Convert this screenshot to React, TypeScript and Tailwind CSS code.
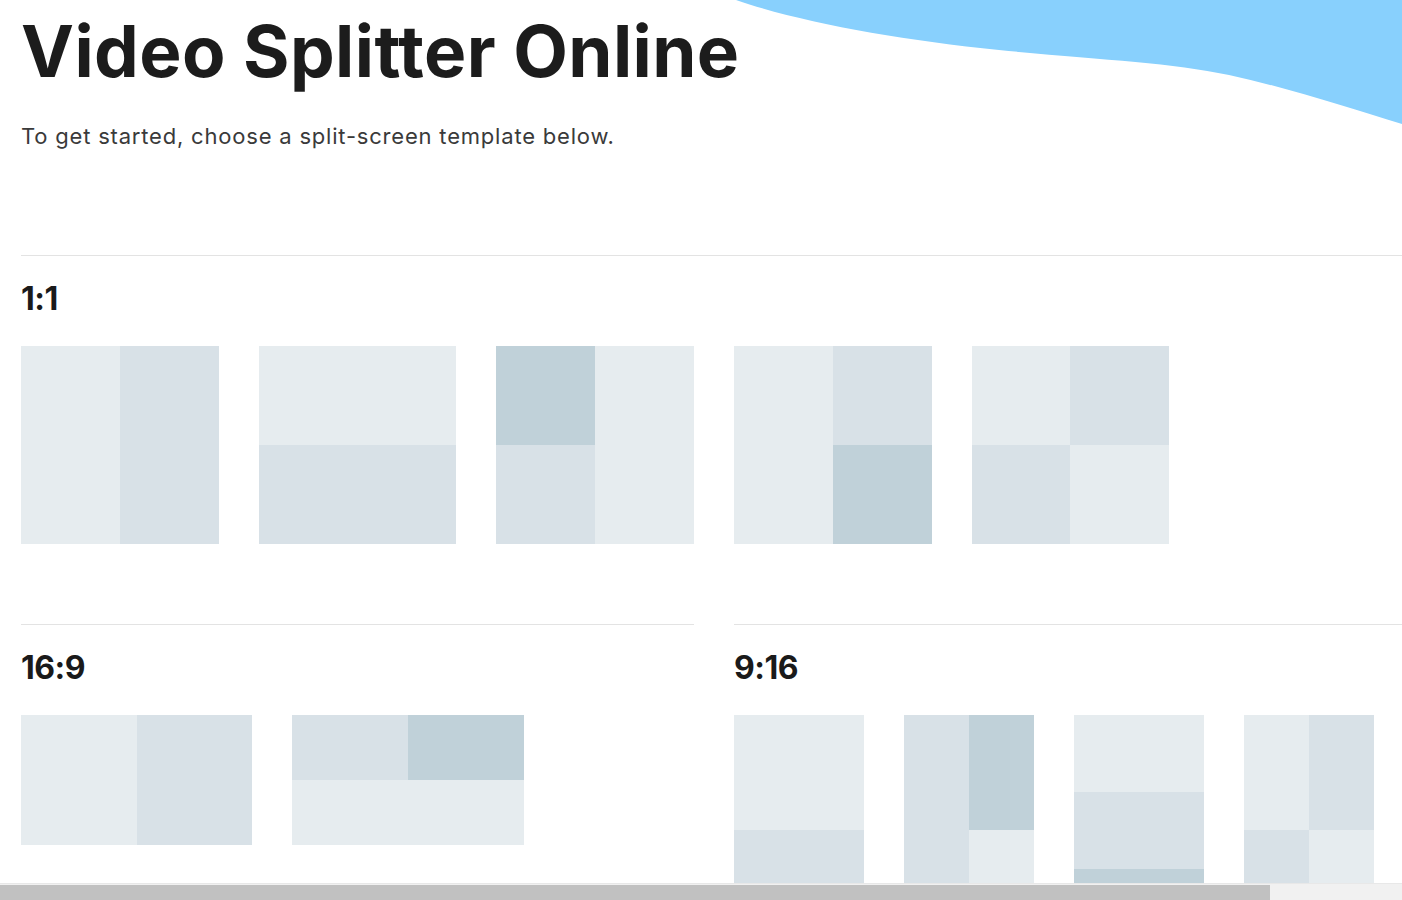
import React from "react";

const L = "bg-[#e6ecef]";
const M = "bg-[#d8e1e7]";
const D = "bg-[#c0d1d9]";

function Square1() {
  return (
    <div className="flex aspect-square">
      <div className={`flex-1 ${L}`} />
      <div className={`flex-1 ${M}`} />
    </div>
  );
}
function Square2() {
  return (
    <div className="flex flex-col aspect-square">
      <div className={`flex-1 ${L}`} />
      <div className={`flex-1 ${M}`} />
    </div>
  );
}
function Square3() {
  return (
    <div className="flex aspect-square">
      <div className="flex flex-1 flex-col">
        <div className={`flex-1 ${D}`} />
        <div className={`flex-1 ${M}`} />
      </div>
      <div className={`flex-1 ${L}`} />
    </div>
  );
}
function Square4() {
  return (
    <div className="flex aspect-square">
      <div className={`flex-1 ${L}`} />
      <div className="flex flex-1 flex-col">
        <div className={`flex-1 ${M}`} />
        <div className={`flex-1 ${D}`} />
      </div>
    </div>
  );
}
function Square5() {
  return (
    <div className="grid aspect-square grid-cols-2 grid-rows-2">
      <div className={L} />
      <div className={M} />
      <div className={M} />
      <div className={L} />
    </div>
  );
}

function Wide1() {
  return (
    <div className="flex h-[130px] w-[231px]">
      <div className={`flex-1 ${L}`} />
      <div className={`flex-1 ${M}`} />
    </div>
  );
}
function Wide2() {
  return (
    <div className="flex h-[130px] w-[232px] flex-col">
      <div className="flex flex-1">
        <div className={`flex-1 ${M}`} />
        <div className={`flex-1 ${D}`} />
      </div>
      <div className={`flex-1 ${L}`} />
    </div>
  );
}

function Tall1() {
  return (
    <div className="flex h-[231px] w-[130px] flex-col">
      <div className={`flex-1 ${L}`} />
      <div className={`flex-1 ${M}`} />
    </div>
  );
}
function Tall2() {
  return (
    <div className="flex h-[231px] w-[130px]">
      <div className={`flex-1 ${M}`} />
      <div className="flex flex-1 flex-col">
        <div className={`flex-1 ${D}`} />
        <div className={`flex-1 ${L}`} />
      </div>
    </div>
  );
}
function Tall3() {
  return (
    <div className="flex h-[231px] w-[130px] flex-col">
      <div className={`flex-1 ${L}`} />
      <div className={`flex-1 ${M}`} />
      <div className={`flex-1 ${D}`} />
    </div>
  );
}
function Tall4() {
  return (
    <div className="grid h-[231px] w-[130px] grid-cols-2 grid-rows-2">
      <div className={L} />
      <div className={M} />
      <div className={M} />
      <div className={L} />
    </div>
  );
}

function Heading({ children }: { children: React.ReactNode }) {
  return (
    <h2 className="pt-[23px] text-[32px] font-bold leading-[40px] tracking-[-0.5px] text-[#1a1a1a]">
      {children}
    </h2>
  );
}

export default function App() {
  return (
    <div className="flex h-[900px] w-[1402px] flex-col overflow-hidden bg-white font-['Inter',sans-serif]">
      <div className="relative flex-1 overflow-hidden">
        <svg
          className="absolute right-0 top-0"
          width="666"
          height="126"
          viewBox="737 0 666 126"
          aria-hidden="true"
        >
          <path
            d="M737 0 C 800 22, 900 40, 1000 50 C 1100 60, 1170 62, 1230 75 C 1290 88, 1350 108, 1403 124 L1403 0 Z"
            fill="#88d0fd"
          />
        </svg>
        <div className="relative w-[1548px] pl-[21px]">
          <div className="w-[1386px]">
            <h1 className="pt-[15px] text-[71px] font-bold leading-[72px] tracking-[0.4px] text-[#1c1c1c] [font-variant-ligatures:none]">
              Video Splitter Online
            </h1>
            <p className="mt-[33px] text-[22px] leading-[33px] tracking-[0.8px] text-[#3a3a3a]">
              To get started, choose a split-screen template below.
            </p>

            <section className="mt-[102px] border-t border-[#e3e3e3]">
              <Heading>1:1</Heading>
              <div className="mt-[27px] grid grid-cols-6 gap-[40px]">
                <Square1 />
                <Square2 />
                <Square3 />
                <Square4 />
                <Square5 />
              </div>
            </section>

            <div className="mt-[80px] grid grid-cols-2 gap-[40px]">
              <section className="border-t border-[#e3e3e3]">
                <Heading>16:9</Heading>
                <div className="mt-[27px] flex gap-[40px]">
                  <Wide1 />
                  <Wide2 />
                </div>
              </section>
              <section className="border-t border-[#e3e3e3]">
                <Heading>9:16</Heading>
                <div className="mt-[27px] flex gap-[40px]">
                  <Tall1 />
                  <Tall2 />
                  <Tall3 />
                  <Tall4 />
                </div>
              </section>
            </div>
          </div>
        </div>
      </div>
      <div className="h-[17px] shrink-0 border-t border-[#e8e8e8] bg-[#f1f1f1] pt-[1px]">
        <div className="h-full w-[1270px] bg-[#c1c1c1]" />
      </div>
    </div>
  );
}
